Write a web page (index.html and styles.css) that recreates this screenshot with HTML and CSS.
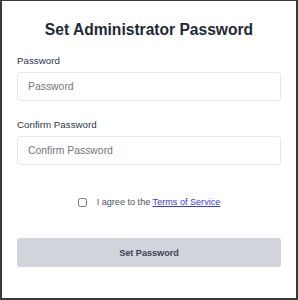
FILE: index.html
```html
<!DOCTYPE html>
<html lang="en">
<head>
    <meta charset="UTF-8">
    <meta name="viewport" content="width=device-width, initial-scale=1.0">
    <title>Set Administrator Password</title>
    <link rel="stylesheet" href="styles.css">
</head>
<body>
    <div class="setup-card">
        <h1 class="setup-title">Set Administrator Password</h1>

        <form class="setup-form">
            <div class="field">
                <label for="password">Password</label>
                <input type="password" id="password" placeholder="Password">
            </div>

            <div class="field">
                <label for="confirm">Confirm Password</label>
                <input type="password" id="confirm" placeholder="Confirm Password">
            </div>

            <div class="agree-row">
                <input type="checkbox" id="agree">
                <label for="agree">I agree to the <a href="#">Terms of Service</a></label>
            </div>

            <button type="submit" class="submit-btn" disabled>Set Password</button>
        </form>
    </div>
</body>
</html>
```

FILE: styles.css
```css
* {
    margin: 0;
    padding: 0;
    box-sizing: border-box;
    font-family: 'Liberation Sans', Arial, sans-serif;
}

body {
    width: 298px;
    height: 300px;
    background: #fff;
    overflow: hidden;
}

.setup-card {
    height: 300px;
    border: 2px solid #3a3a3a;
    border-top-width: 1px;
    padding: 19px 15px 0;
}

.setup-title {
    text-align: center;
    font-size: 15.6px;
    font-weight: 700;
    color: #1f2937;
    line-height: 19px;
    margin-bottom: 16px;
}

.field {
    display: flex;
    flex-direction: column;
    margin-bottom: 18px;
}

.field label {
    font-size: 9.75px;
    color: #2d3748;
    line-height: 11px;
    margin-bottom: 6px;
}

.field input {
    height: 29px;
    border: 1px solid #e5e7eb;
    border-radius: 3px;
    padding: 0 10px;
    font-size: 10.4px;
    color: #111827;
    outline: none;
}

.field input::placeholder {
    color: #707680;
}

.agree-row {
    display: flex;
    align-items: center;
    justify-content: center;
    gap: 10px;
    height: 12px;
    margin-top: 31px;
    font-size: 9.1px;
    color: #4b5563;
}

.agree-row input {
    width: 9px;
    height: 9px;
}

.agree-row a {
    color: #3b3bf0;
}

.submit-btn {
    display: block;
    width: 100%;
    height: 29px;
    margin-top: 30px;
    border: none;
    border-radius: 3px;
    background: #d1d5db;
    color: #374151;
    font-size: 9.1px;
    font-weight: 700;
}
```
